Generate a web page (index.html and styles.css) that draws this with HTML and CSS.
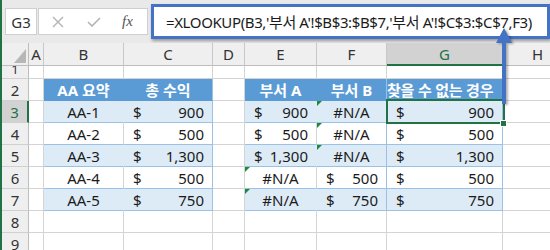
FILE: index.html
```html
<!DOCTYPE html>
<html lang="ko">
<head>
  <meta charset="UTF-8" />
  <meta name="viewport" content="width=device-width, initial-scale=1.0" />
  <title>XLOOKUP - 찾을 수 없는 경우</title>
  <link rel="stylesheet" href="styles.css">
</head>
<body>
  <div class="app">
    <div class="formula-bar">
      <div class="name-box">G3</div>
      <div class="fx-buttons">
        <svg class="icon" width="12" height="12" viewBox="0 0 12 12"><path d="M1 1 L11 11 M11 1 L1 11" stroke="#b3b3b3" stroke-width="1.4" fill="none"/></svg>
        <svg class="icon" width="14" height="10" viewBox="0 0 14 10"><path d="M1 5 L5 9 L13 1" stroke="#b3b3b3" stroke-width="1.6" fill="none"/></svg>
        <span class="fx">fx</span>
      </div>
      <div class="formula">=XLOOKUP(B3,'부서 A'!$B$3:$B$7,'부서 A'!$C$3:$C$7,F3)</div>
    </div>

    <div class="sheet">
      <!-- column headers -->
      <div class="c corner"><span class="tri"></span></div>
      <div class="c hd">A</div>
      <div class="c hd">B</div>
      <div class="c hd">C</div>
      <div class="c hd">D</div>
      <div class="c hd">E</div>
      <div class="c hd">F</div>
      <div class="c hd hd-on">G</div>
      <div class="c hd">H</div>

      <!-- row 1 -->
      <div class="c rh rh-short"><span>1</span></div>
      <div class="c"></div><div class="c"></div><div class="c"></div><div class="c"></div>
      <div class="c"></div><div class="c"></div><div class="c"></div><div class="c"></div>

      <!-- row 2 -->
      <div class="c rh">2</div>
      <div class="c"></div>
      <div class="c th th-in">AA 요약</div>
      <div class="c th th-end">총 수익</div>
      <div class="c"></div>
      <div class="c th th-in">부서 A</div>
      <div class="c th th-end">부서 B</div>
      <div class="c th th-end th-wide">찾을 수 없는 경우</div>
      <div class="c"></div>

      <!-- row 3 -->
      <div class="c rh rh-on">3</div>
      <div class="c"></div>
      <div class="c band ctr">AA-1</div>
      <div class="c band edge money"><span>$</span><span>900</span></div>
      <div class="c"></div>
      <div class="c band money"><span>$</span><span>900</span></div>
      <div class="c band edge ctr err">#N/A</div>
      <div class="c band edge money"><span>$</span><span>900</span></div>
      <div class="c"></div>

      <!-- row 4 -->
      <div class="c rh">4</div>
      <div class="c"></div>
      <div class="c plain ctr">AA-2</div>
      <div class="c plain edge money"><span>$</span><span>500</span></div>
      <div class="c"></div>
      <div class="c plain money"><span>$</span><span>500</span></div>
      <div class="c plain edge ctr err">#N/A</div>
      <div class="c plain edge money"><span>$</span><span>500</span></div>
      <div class="c"></div>

      <!-- row 5 -->
      <div class="c rh">5</div>
      <div class="c"></div>
      <div class="c band ctr">AA-3</div>
      <div class="c band edge money"><span>$</span><span>1,300</span></div>
      <div class="c"></div>
      <div class="c band money"><span>$</span><span>1,300</span></div>
      <div class="c band edge ctr err">#N/A</div>
      <div class="c band edge money"><span>$</span><span>1,300</span></div>
      <div class="c"></div>

      <!-- row 6 -->
      <div class="c rh">6</div>
      <div class="c"></div>
      <div class="c plain ctr">AA-4</div>
      <div class="c plain edge money"><span>$</span><span>500</span></div>
      <div class="c"></div>
      <div class="c plain ctr err">#N/A</div>
      <div class="c plain edge money"><span>$</span><span>500</span></div>
      <div class="c plain edge money"><span>$</span><span>500</span></div>
      <div class="c"></div>

      <!-- row 7 -->
      <div class="c rh">7</div>
      <div class="c"></div>
      <div class="c band ctr">AA-5</div>
      <div class="c band edge money"><span>$</span><span>750</span></div>
      <div class="c"></div>
      <div class="c band ctr err">#N/A</div>
      <div class="c band edge money"><span>$</span><span>750</span></div>
      <div class="c band edge money"><span>$</span><span>750</span></div>
      <div class="c"></div>

      <!-- row 8 -->
      <div class="c rh">8</div>
      <div class="c"></div><div class="c"></div><div class="c"></div><div class="c"></div>
      <div class="c"></div><div class="c"></div><div class="c"></div><div class="c"></div>

      <!-- row 9 -->
      <div class="c rh rh-last">9</div>
      <div class="c"></div><div class="c"></div><div class="c"></div><div class="c"></div>
      <div class="c"></div><div class="c"></div><div class="c"></div><div class="c"></div>
    </div>

    <!-- active cell G3 -->
    <div class="selection"></div>
    <div class="fill-handle"></div>

    <!-- callout arrow from G3 up to the formula -->
    <svg class="arrow" width="20" height="76" viewBox="0 0 20 76">
      <path d="M10 14 L10 76" stroke="#4472c4" stroke-width="4" />
      <path d="M10 0 L2 15 L18 15 Z" fill="#4472c4" />
    </svg>
  </div>
</body>
</html>
```

FILE: styles.css
```css
* {
  box-sizing: border-box;
}
body {
  margin: 0;
  background-color: #ffffff;
  font-family: "Noto Sans", "Noto Sans CJK KR", sans-serif;
  font-size: 15px;
  color: #1b1b1b;
}
.app {
  position: relative;
  width: 550px;
  height: 250px;
  overflow: hidden;
  background-color: #e9e9e9;
  border-left: 2px solid #217346;
}

/* formula bar */
.formula-bar {
  display: flex;
  align-items: flex-start;
  height: 43px;
  padding: 4px 0 0 3px;
}
.name-box {
  width: 32px;
  height: 27px;
  margin-top: 4px;
  background-color: #ffffff;
  border: 1px solid #cfcfcf;
  color: #333333;
  display: flex;
  align-items: center;
  justify-content: center;
}
.fx-buttons {
  width: 110px;
  height: 27px;
  margin: 4px 0 0 1px;
  background-color: #ffffff;
  border: 1px solid #cfcfcf;
  display: flex;
  align-items: center;
  gap: 23px;
  padding-left: 13px;
}
.fx {
  font-family: "Liberation Serif", serif;
  font-style: italic;
  font-size: 15px;
  color: #555555;
  margin-left: -2px;
}
.formula {
  width: 399px;
  height: 35px;
  margin-left: 3px;
  background-color: #ffffff;
  border: 3px solid #4472c4;
  box-shadow: 1px 2px 3px rgba(0, 0, 0, 0.35);
  padding-left: 12px;
  display: flex;
  align-items: center;
  white-space: nowrap;
  font-size: 15px;
  letter-spacing: -0.38px;
  color: #1b1b1b;
}

/* grid */
.sheet {
  display: grid;
  grid-template-columns: 27px 15px 80px 89px 32px 72px 70px 116px 70px;
  grid-template-rows: 23px 13px repeat(8, 22px);
  background-color: #ffffff;
}
.c {
  border-right: 1px solid #d4d4d4;
  border-bottom: 1px solid #d4d4d4;
  white-space: nowrap;
  display: flex;
  align-items: center;
  overflow: hidden;
}
.corner {
  background-color: #efefef;
  border-right-color: #bdbdbd;
  border-bottom-color: #bdbdbd;
  align-items: flex-end;
  justify-content: flex-end;
  padding: 0 2px 2px 0;
}
.tri {
  width: 0;
  height: 0;
  border-left: 12px solid transparent;
  border-bottom: 14px solid #b7b7b7;
}
.hd {
  background-color: #efefef;
  border-right-color: #c8c8c8;
  border-bottom-color: #bdbdbd;
  justify-content: center;
  color: #333333;
}
.hd-on {
  background-color: #d2d2d2;
  color: #217346;
  border-bottom: 2px solid #217346;
}
.rh {
  background-color: #efefef;
  border-right-color: #bdbdbd;
  border-bottom-color: #d0d0d0;
  justify-content: center;
  color: #333333;
}
.rh-short {
  align-items: flex-start;
  font-size: 13px;
}
.rh-short span {
  margin-top: -6px;
}
.rh-last {
  align-items: flex-start;
  padding-top: 1px;
}
.rh-on {
  background-color: #d2d2d2;
  color: #217346;
  border-right: 2px solid #217346;
}

/* tables */
.th {
  background-color: #5b9bd5;
  color: #ffffff;
  font-weight: bold;
  justify-content: center;
  border-bottom-color: #5b9bd5;
}
.th-in {
  border-right-color: #5b9bd5;
}
.th-end {
  border-right-color: #9bc2e6;
}
.th-wide {
  justify-content: flex-start;
  letter-spacing: -0.2px;
  overflow: visible;
}
.band {
  background-color: #ddebf7;
  border-right-color: #ddebf7;
  border-bottom-color: #9bc2e6;
}
.plain {
  border-bottom-color: #9bc2e6;
}
.edge {
  border-right-color: #9bc2e6;
}
.ctr {
  justify-content: center;
}
.money {
  justify-content: space-between;
  padding: 0 8px 0 9px;
}
.err {
  position: relative;
}
.err::before {
  content: "";
  position: absolute;
  left: 0;
  top: 0;
  border-top: 5px solid #1e8a3a;
  border-right: 5px solid transparent;
}

/* overlays */
.selection {
  position: absolute;
  left: 384px;
  top: 99px;
  width: 119px;
  height: 25px;
  border: 2px solid #217346;
}
.fill-handle {
  position: absolute;
  left: 498px;
  top: 120px;
  width: 7px;
  height: 7px;
  background-color: #217346;
  border: 1px solid #ffffff;
}
.arrow {
  position: absolute;
  left: 492px;
  top: 28px;
  filter: drop-shadow(2px 1px 1px rgba(0, 0, 0, 0.3));
}
```
